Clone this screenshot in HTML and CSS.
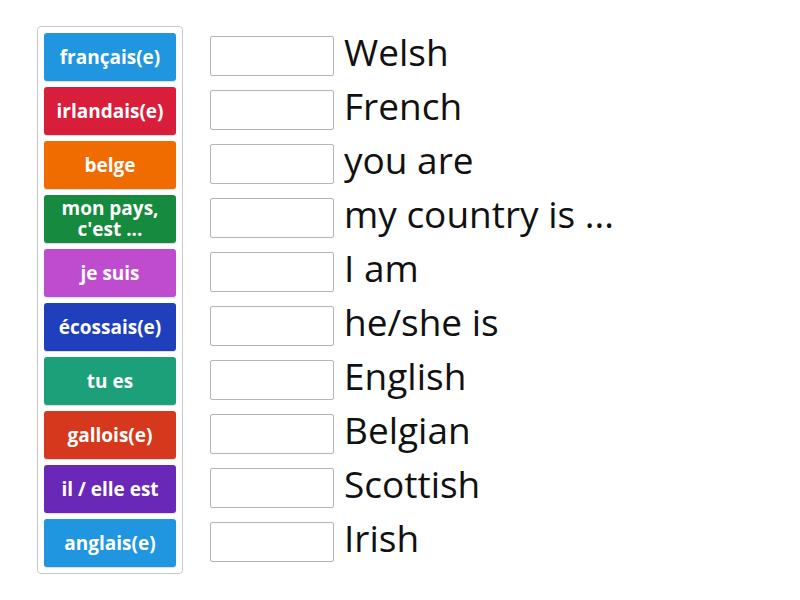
FILE: index.html
```html
<!DOCTYPE html>
<html>
<head>
<meta charset="utf-8">
<link rel="stylesheet" href="styles.css">
</head>
<body>
<div class="page">
  <div class="bank">
    <div class="tile c1">français(e)</div>
    <div class="tile c2">irlandais(e)</div>
    <div class="tile c3">belge</div>
    <div class="tile c4">mon pays,<br>c'est ...</div>
    <div class="tile c5">je suis</div>
    <div class="tile c6">écossais(e)</div>
    <div class="tile c7">tu es</div>
    <div class="tile c8">gallois(e)</div>
    <div class="tile c9">il / elle est</div>
    <div class="tile c1">anglais(e)</div>
  </div>
  <div class="targets">
    <div class="row"><div class="slot"></div><span class="label">Welsh</span></div>
    <div class="row"><div class="slot"></div><span class="label">French</span></div>
    <div class="row"><div class="slot"></div><span class="label">you are</span></div>
    <div class="row"><div class="slot"></div><span class="label">my country is ...</span></div>
    <div class="row"><div class="slot"></div><span class="label">I am</span></div>
    <div class="row"><div class="slot"></div><span class="label">he/she is</span></div>
    <div class="row"><div class="slot"></div><span class="label">English</span></div>
    <div class="row"><div class="slot"></div><span class="label">Belgian</span></div>
    <div class="row"><div class="slot"></div><span class="label">Scottish</span></div>
    <div class="row"><div class="slot"></div><span class="label">Irish</span></div>
  </div>
</div>
</body>
</html>
```
FILE: styles.css
```css
html, body {
  margin: 0;
  padding: 0;
  background: #fff;
  font-family: "Open Sans", "Noto Sans", sans-serif;
}
.page {
  display: flex;
  align-items: flex-start;
  padding: 26px 0 0 37px;
  gap: 27px;
}
.bank {
  display: flex;
  flex-direction: column;
  gap: 6px;
  padding: 6px;
  border: 1px solid #c8c8c8;
  border-radius: 4px;
  width: 132px;
}
.tile {
  height: 48px;
  border-radius: 3px;
  color: #fff;
  font-weight: 700;
  font-size: 19px;
  line-height: 21px;
  display: flex;
  align-items: center;
  justify-content: center;
  text-align: center;
  box-shadow: 0 1px 1px rgba(0,0,0,0.15);
}
.c1 { background: #2196e0; }
.c2 { background: #d81e3a; }
.c3 { background: #f06c00; }
.c4 { background: #168a3e; }
.c5 { background: #bf4ccf; }
.c6 { background: #1f3fbd; }
.c7 { background: #1ca07a; }
.c8 { background: #d6381d; }
.c9 { background: #6a28b8; }
.targets {
  display: flex;
  flex-direction: column;
  gap: 6px;
  padding-top: 6px;
}
.row {
  height: 48px;
  display: flex;
  align-items: center;
}
.slot {
  width: 122px;
  height: 38px;
  border: 1px solid #b4b4b4;
  border-radius: 2px;
  background: #fff;
}
.label {
  margin-left: 10px;
  margin-bottom: 8px;
  font-size: 37px;
  line-height: 48px;
  color: #111;
}
```
